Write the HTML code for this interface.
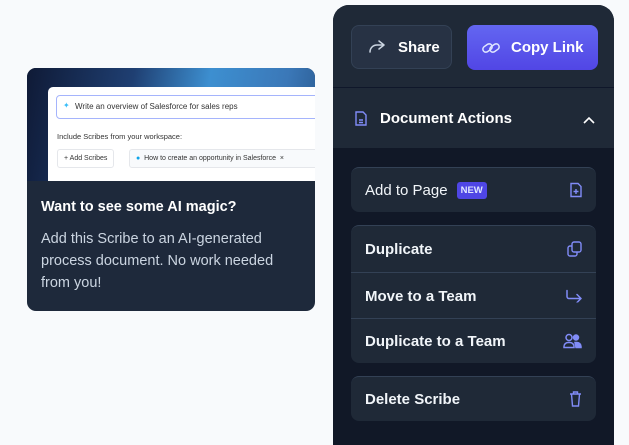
<!DOCTYPE html>
<html><head><style>
*{margin:0;padding:0;box-sizing:border-box}
body{width:629px;height:437px;background:#f8fafc;font-family:"Liberation Sans",sans-serif;position:relative;overflow:hidden}
.card{position:absolute;left:27px;top:68px;width:288px;height:243px;border-radius:9px;background:#1e293b;overflow:hidden}
.img{position:absolute;left:0;top:0;width:288px;height:113px;background:linear-gradient(100deg,#0f1a36 0%,#1f3f72 35%,#3d8fd0 60%,#3b78b8 85%,#2a5a90 100%)}
.white{position:absolute;left:21px;top:19px;width:267px;height:94px;background:#fff;border-radius:5px 0 0 0}
.inp{position:absolute;left:8px;top:8px;width:270px;height:24px;border:1px solid #a5b4fc;border-radius:4px;font-size:8px;color:#333;padding:6px 0 0 18px}
.t{position:absolute;font-size:7.5px;color:#333}
.chip{position:absolute;height:19px;border:1px solid #e5e7eb;border-radius:3px;font-size:7px;color:#333;padding:5px 6px;background:#fff}
.card h3{position:absolute;left:14px;top:131px;font-size:14.5px;color:#fff;font-weight:bold}
.card p{position:absolute;left:14px;top:160px;width:256px;font-size:14.5px;line-height:22px;color:#cbd5e1}
.panel{position:absolute;left:333px;top:5px;width:281px;height:440px;border-radius:16px 16px 0 0;background:#111827;overflow:hidden}
.top{position:absolute;left:0;top:0;width:281px;height:143px;background:#1f2937}
.div{position:absolute;left:0;top:82px;width:281px;height:1px;background:#0f172a}
.btn{position:absolute;border-radius:8px;color:#fff;font-weight:bold;font-size:15px;display:flex;align-items:center}
.item{position:absolute;left:18px;width:245px;background:#1f2937;color:#f1f5f9;font-size:15px;font-weight:bold;display:flex;align-items:center;padding-left:14px;border-top:1px solid #334155}
.ic{position:absolute;right:14px;top:50%;transform:translateY(-50%)}
</style></head><body>
<div class="card">
 <div class="img"><div class="white">
  <div class="inp"><span style="position:absolute;left:6px;top:5px;color:#38bdf8;font-size:8px">✦</span>Write an overview of Salesforce for sales reps</div>
  <div class="t" style="left:9px;top:45px">Include Scribes from your workspace:</div>
  <div class="chip" style="left:9px;top:62px">+ Add Scribes</div>
  <div class="chip" style="left:81px;top:62px;background:#f8fafc;width:190px"><span style="color:#0ea5e9">●</span>&nbsp; How to create an opportunity in Salesforce &nbsp;×</div>
 </div></div>
 <h3>Want to see some AI magic?</h3>
 <p>Add this Scribe to an AI-generated process document. No work needed from you!</p>
</div>
<div class="panel">
 <div class="top"></div><div class="div"></div>
 <div class="btn" style="left:18px;top:20px;width:101px;height:44px;background:#273244;border:1px solid #334155;padding-left:16px">
  <svg width="18" height="14" viewBox="0 0 18 14" fill="none" stroke="#cbd5e1" stroke-width="1.5" stroke-linecap="round" stroke-linejoin="round"><path d="M11 1l5 4-5 4M16 5H9c-4 0-7 3-7 7"/></svg><span style="margin-left:12px">Share</span></div>
 <div class="btn" style="left:134px;top:20px;width:131px;height:45px;background:linear-gradient(#6366f1,#5146e5);padding-left:14px">
  <svg width="20" height="14" viewBox="0 0 20 14" fill="none" stroke="#e0e7ff" stroke-width="1.5"><rect x="1.5" y="4" width="10" height="6" rx="3" transform="rotate(-35 6.5 7)"/><rect x="8.5" y="4" width="10" height="6" rx="3" transform="rotate(-35 13.5 7)"/></svg><span style="margin-left:10px">Copy Link</span></div>
 <svg style="position:absolute;left:22px;top:106px" width="12" height="15" viewBox="0 0 12 15" fill="none" stroke="#818cf8" stroke-width="1.4"><path d="M1 1h7l3 3v10H1z"/><path d="M4 9h4M4 11.5h4"/></svg>
 <div style="position:absolute;left:47px;top:105px;color:#fff;font-weight:bold;font-size:15px">Document Actions</div>
 <svg style="position:absolute;left:250px;top:111px" width="12" height="8" viewBox="0 0 12 8" fill="none" stroke="#fff" stroke-width="1.6"><path d="M1 7l5-5 5 5"/></svg>
 <div class="item" style="top:162px;height:45px;border-radius:8px;font-weight:normal">Add to Page<span style="margin-left:9px;background:#4f46e5;color:#e0e7ff;font-size:9.5px;font-weight:bold;padding:3px 4px;border-radius:3px">NEW</span>
  <svg class="ic" width="12" height="15" viewBox="0 0 12 15" fill="none" stroke="#818cf8" stroke-width="1.4"><path d="M1 1h7l3 3v10H1z"/><path d="M6 6.5v5M3.5 9h5"/></svg></div>
 <div class="item" style="top:220px;height:47px;border-radius:8px 8px 0 0">Duplicate
  <svg class="ic" width="15" height="16" viewBox="0 0 15 16" fill="none" stroke="#818cf8" stroke-width="1.4"><rect x="5" y="1" width="9" height="10" rx="2"/><path d="M5 5H3a2 2 0 0 0-2 2v6a2 2 0 0 0 2 2h5a2 2 0 0 0 2-2v-2"/></svg></div>
 <div class="item" style="top:267px;height:47px">Move to a Team
  <svg class="ic" width="16" height="13" viewBox="0 0 16 13" fill="none" stroke="#818cf8" stroke-width="1.5" stroke-linecap="round"><path d="M1 1v6a2 2 0 0 0 2 2h12M11 5l4 4-4 4"/></svg></div>
 <div class="item" style="top:313px;height:45px;border-radius:0 0 8px 8px">Duplicate to a Team
  <svg class="ic" width="19" height="15" viewBox="0 0 19 15" fill="none" stroke="#818cf8" stroke-width="1.5"><circle cx="6" cy="4" r="3"/><path d="M1 14v-1a4 4 0 0 1 4-4h2a4 4 0 0 1 4 4v1z"/><circle cx="13" cy="4" r="2.5" fill="#818cf8"/><path d="M12 9h2a4 4 0 0 1 4 4v1h-5z" fill="#818cf8"/></svg></div>
 <div class="item" style="top:371px;height:45px;border-radius:8px">Delete Scribe
  <svg class="ic" width="13" height="16" viewBox="0 0 13 16" fill="none" stroke="#818cf8" stroke-width="1.4"><path d="M1 3h11M4.5 3V1h4v2M2.5 3l1 12h6l1-12"/></svg></div>
</div>
</body></html>
